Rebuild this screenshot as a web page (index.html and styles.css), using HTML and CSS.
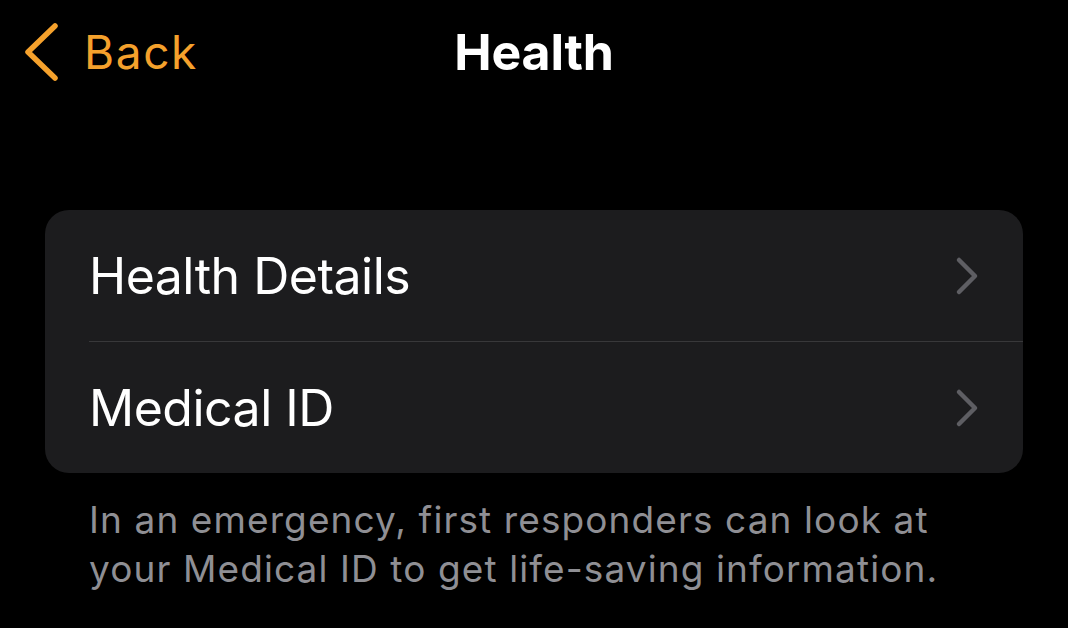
FILE: index.html
```html
<!DOCTYPE html>
<html lang="en">
<head>
    <meta charset="UTF-8">
    <meta name="viewport" content="width=device-width, initial-scale=1.0">
    <title>Health</title>
    <link rel="stylesheet" href="styles.css">
</head>
<body>
    <div class="screen">
        <header class="nav">
            <a class="back" href="#">
                <svg class="back-icon" width="40" height="62" viewBox="0 0 40 62">
                    <path d="M35 5 L8 31 L35 57" fill="none" stroke="currentColor" stroke-width="5.5" stroke-linecap="round" stroke-linejoin="round"/>
                </svg>
                <span>Back</span>
            </a>
            <h1 class="title">Health</h1>
        </header>

        <div class="group">
            <a class="row" href="#">
                <span class="row-label">Health Details</span>
                <svg class="chevron" width="28" height="40" viewBox="0 0 28 40">
                    <path d="M6 4 L22 20 L6 36" fill="none" stroke="currentColor" stroke-width="4.5" stroke-linecap="round" stroke-linejoin="round"/>
                </svg>
            </a>
            <a class="row" href="#">
                <span class="row-label">Medical ID</span>
                <svg class="chevron" width="28" height="40" viewBox="0 0 28 40">
                    <path d="M6 4 L22 20 L6 36" fill="none" stroke="currentColor" stroke-width="4.5" stroke-linecap="round" stroke-linejoin="round"/>
                </svg>
            </a>
        </div>

        <p class="footnote">In an emergency, first responders can look at your Medical ID to get life-saving information.</p>
    </div>
</body>
</html>
```

FILE: styles.css
```css
body { margin: 0; background: #000; font-family: Inter, "Noto Sans", sans-serif; color: #fff; }
.screen { width: 1068px; height: 628px; overflow: hidden; }

.nav { position: relative; height: 104px; display: flex; align-items: center; justify-content: center; }
.back { position: absolute; left: 20px; top: 21px; display: flex; align-items: center; gap: 24px; color: #f5a12c; text-decoration: none; font-size: 46px; letter-spacing: 1.6px; }
.back-icon { display: block; }
.title { margin: 0; font-size: 50px; font-weight: 700; letter-spacing: -0.2px; }

.group { margin: 106px 45px 0 45px; background: #1c1c1e; border-radius: 24px; overflow: hidden; }
.row { display: flex; align-items: center; justify-content: space-between; height: 131px; padding: 0 42px 0 44px; color: #fff; text-decoration: none; }
.row + .row { border-top: 1.5px solid #38383a; margin-left: 44px; padding-left: 0; }
.row-label { font-size: 50px; letter-spacing: -0.5px; }
.chevron { color: #5e5e63; display: block; }

.footnote { margin: 22px 60px 0 89px; font-size: 37px; line-height: 49px; color: #8f8f94; letter-spacing: 1.1px; }
```
